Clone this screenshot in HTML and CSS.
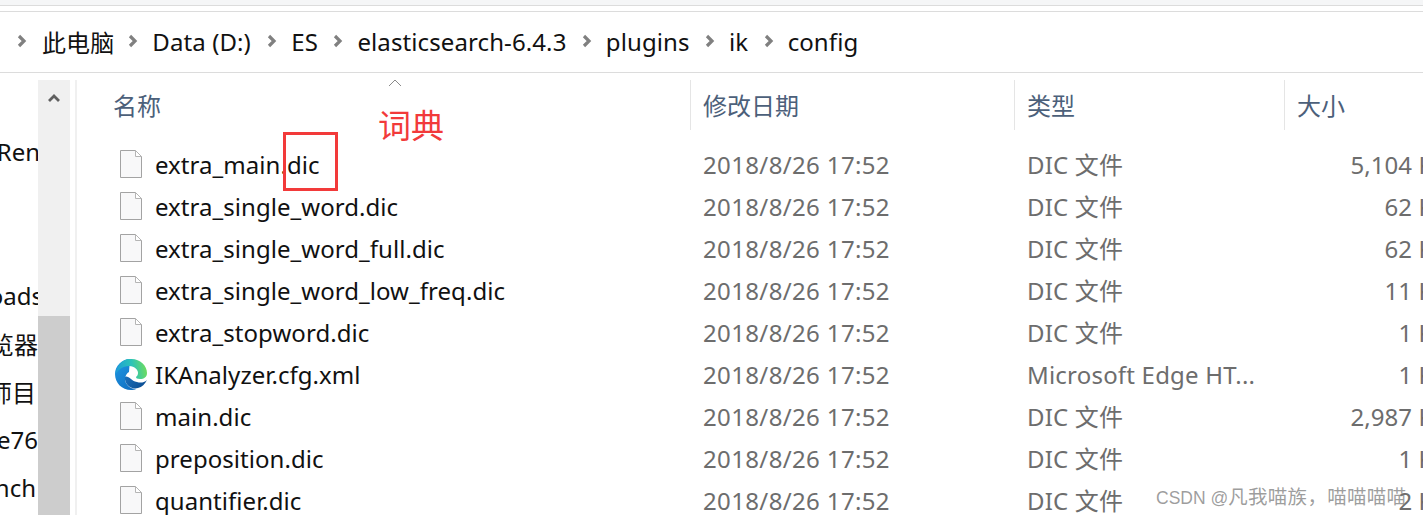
FILE: index.html
```html
<!DOCTYPE html>
<html lang="zh-CN">
<head>
<meta charset="utf-8">
<title>config</title>
<link rel="stylesheet" href="styles.css">
</head>
<body>
<div class="window">
  <div class="topstrip"></div>
  <div class="gapstrip"></div>
  <nav class="crumbs">
    <svg class="chev" viewBox="0 0 10 14"><path d="M2 2l5 5-5 5"/></svg><span>此电脑</span>
    <svg class="chev" viewBox="0 0 10 14"><path d="M2 2l5 5-5 5"/></svg><span>Data (D:)</span>
    <svg class="chev" viewBox="0 0 10 14"><path d="M2 2l5 5-5 5"/></svg><span>ES</span>
    <svg class="chev" viewBox="0 0 10 14"><path d="M2 2l5 5-5 5"/></svg><span>elasticsearch-6.4.3</span>
    <svg class="chev" viewBox="0 0 10 14"><path d="M2 2l5 5-5 5"/></svg><span>plugins</span>
    <svg class="chev" viewBox="0 0 10 14"><path d="M2 2l5 5-5 5"/></svg><span>ik</span>
    <svg class="chev" viewBox="0 0 10 14"><path d="M2 2l5 5-5 5"/></svg><span>config</span>
  </nav>
  <div class="main">
    <aside class="tree">
      <div class="tree-item">Ren</div>
      <div class="tree-item"></div>
      <div class="tree-item"></div>
      <div class="tree-item tree-item--right">oads</div>
      <div class="tree-item tree-item--near">览器</div>
      <div class="tree-item tree-item--left">师目</div>
      <div class="tree-item tree-item--near">e76</div>
      <div class="tree-item tree-item--left">nch</div>
    </aside>
    <div class="scrollbar">
      <div class="track">
        <svg class="scroll-up" viewBox="0 0 14 10"><path d="M2 8l5-5 5 5"/></svg>
      </div>
      <div class="thumb"></div>
    </div>
    <section class="list">
      <svg class="sort" viewBox="0 0 14 8"><path d="M1 7l6-6 6 6"/></svg>
      <header class="head">
        <div class="col">名称</div>
        <div class="col">修改日期</div>
        <div class="col">类型</div>
        <div class="col">大小</div>
      </header>
      <div class="row"><span class="name"><svg class="ficon" viewBox="0 0 22 28"><use href="#doc"/></svg>extra_main.dic</span><span class="date">2018/8/26 17:52</span><span class="type">DIC 文件</span><span class="size">5,104 KB</span></div>
      <div class="row"><span class="name"><svg class="ficon" viewBox="0 0 22 28"><use href="#doc"/></svg>extra_single_word.dic</span><span class="date">2018/8/26 17:52</span><span class="type">DIC 文件</span><span class="size">62 KB</span></div>
      <div class="row"><span class="name"><svg class="ficon" viewBox="0 0 22 28"><use href="#doc"/></svg>extra_single_word_full.dic</span><span class="date">2018/8/26 17:52</span><span class="type">DIC 文件</span><span class="size">62 KB</span></div>
      <div class="row"><span class="name"><svg class="ficon" viewBox="0 0 22 28"><use href="#doc"/></svg>extra_single_word_low_freq.dic</span><span class="date">2018/8/26 17:52</span><span class="type">DIC 文件</span><span class="size">11 KB</span></div>
      <div class="row"><span class="name"><svg class="ficon" viewBox="0 0 22 28"><use href="#doc"/></svg>extra_stopword.dic</span><span class="date">2018/8/26 17:52</span><span class="type">DIC 文件</span><span class="size">1 KB</span></div>
      <div class="row">
        <span class="name">
        <svg class="ficon ficon--edge" viewBox="0 0 32 32">
          <defs>
            <linearGradient id="edgeTop" x1="0" y1="0.6" x2="1" y2="0.5"><stop offset="0" stop-color="#1d9bd8"/><stop offset="0.55" stop-color="#2cc3b8"/><stop offset="1" stop-color="#6fdc5c"/></linearGradient>
            <linearGradient id="edgeLeft" x1="0" y1="0" x2="0.6" y2="1"><stop offset="0" stop-color="#1f9ae6"/><stop offset="1" stop-color="#1272c4"/></linearGradient>
            <linearGradient id="edgeBot" x1="0" y1="0" x2="1" y2="0.4"><stop offset="0" stop-color="#1a6fbb"/><stop offset="1" stop-color="#0c4f94"/></linearGradient>
          </defs>
          <path fill="url(#edgeLeft)" d="M15 1C7 1 0 8 0 16c0 9 7 16 16 16 2 0 4-.4 5-1-6 0-11-5-11-10 0-3 2-6 4-7z"/>
          <path fill="url(#edgeBot)" d="M10 19c-1 7 6 13 13 11 4-1 7-4 9-8-3 3-7 3-10 2-3-.5-5-2-6-3-2-2-5-3-6-2z"/>
          <path fill="url(#edgeTop)" d="M15 1c9-1 17 6 17 14 0 4-3 6-7 6-3 0-4-1-4-2 1-1 2-2 2-4 0-3-3-7-9-7-6 0-12 4-14 10C1 9 6 1 15 1z"/>
        </svg>IKAnalyzer.cfg.xml</span><span class="date">2018/8/26 17:52</span><span class="type type--latin">Microsoft Edge HT...</span><span class="size">1 KB</span>
      </div>
      <div class="row"><span class="name"><svg class="ficon" viewBox="0 0 22 28"><use href="#doc"/></svg>main.dic</span><span class="date">2018/8/26 17:52</span><span class="type">DIC 文件</span><span class="size">2,987 KB</span></div>
      <div class="row"><span class="name"><svg class="ficon" viewBox="0 0 22 28"><use href="#doc"/></svg>preposition.dic</span><span class="date">2018/8/26 17:52</span><span class="type">DIC 文件</span><span class="size">1 KB</span></div>
      <div class="row"><span class="name"><svg class="ficon" viewBox="0 0 22 28"><use href="#doc"/></svg>quantifier.dic</span><span class="date">2018/8/26 17:52</span><span class="type">DIC 文件</span><span class="size">2 KB</span></div>
    </section>
  </div>
  <div class="mark-box"></div>
  <div class="mark-label">词典</div>
  <div class="watermark">CSDN @<span class="wm-cjk">凡我喵族，喵喵喵喵</span></div>
</div>
<svg class="defs" width="0" height="0">
  <symbol id="doc" viewBox="0 0 22 28">
    <path d="M.5.5h15l6 6v21H.5z" fill="#f8f8f9" stroke="#a3a3a3"/>
    <path d="M15.5.5v6h6z" fill="#fff" stroke="#b5b5b5"/>
  </symbol>
</svg>
</body>
</html>
```
FILE: styles.css
```css
* { box-sizing: border-box; }
html, body { margin: 0; padding: 0; height: 100%; background: #fff; overflow: hidden; }
body { font-family: "Noto Sans", "Noto Sans CJK SC", sans-serif; }
.window { position: relative; width: 1423px; height: 515px; overflow: hidden; }
.defs { position: absolute; }

.topstrip { height: 6px; background: #f5f6f7; border-bottom: 1px solid #dcdcdc; }
.gapstrip { height: 6px; border-bottom: 1px solid #dcdcdc; }

.crumbs { height: 61px; display: flex; align-items: center; padding: 0 0 2px 17px; border-bottom: 1px solid #dcdcdc; font-size: 24px; letter-spacing: .1px; color: #111; white-space: nowrap; }
.crumbs span { margin: 0 15.4px 0 14px; }
.crumbs span:first-of-type { margin: 0 14px 0 15px; }
.crumbs span:nth-of-type(2) { margin-right: 16.4px; }
.chev { width: 10px; height: 14px; flex: none; }
.chev path { fill: none; stroke: #808080; stroke-width: 3.2; }

.main { display: flex; height: 442px; }
.tree { width: 38px; flex: none; overflow: hidden; padding-top: 54px; font-size: 24px; color: #111; }
.tree-item { height: 48px; width: 40px; display: flex; justify-content: flex-end; align-items: center; white-space: nowrap; }
.tree-item--right { width: 43px; }
.tree-item--near { width: 38px; }
.tree-item--left { width: 36px; }

.scrollbar { width: 32px; flex: none; margin-top: 7px; display: flex; flex-direction: column; }
.track { height: 236px; background: #f0f0f0; padding: 13px 0 0 9px; }
.scroll-up { display: block; width: 14px; height: 10px; }
.scroll-up path { fill: none; stroke: #606060; stroke-width: 2.8; }
.thumb { flex: 1; background: #cdcdcd; }

.list { position: relative; flex: 1; margin-left: 5px; margin-top: 7px; border-left: 2px solid #f0f0f0; min-width: 0; }
.sort { position: absolute; left: 311px; top: -1px; width: 14px; height: 8px; }
.sort path { fill: none; stroke: #8a8a8a; stroke-width: 1; }

.head { display: grid; grid-template-columns: 614px 324px 270px 1fr; height: 50px; margin-bottom: 14px; font-size: 24px; color: #4c607a; }
.col { display: flex; align-items: center; padding: 0 0 2px 12px; border-right: 1px solid #e5e5e5; }
.col:first-child { padding-left: 36px; }
.col:last-child { border-right: 0; }

.row { display: grid; grid-template-columns: 626px 324px 270px 152px; width: 1372px; height: 42px; align-items: center; padding-bottom: 2px; font-size: 24px; letter-spacing: .05px; white-space: nowrap; color: #6d6d6d; }
.name { display: flex; align-items: center; padding-left: 43px; color: #111; }
.ficon { width: 22px; height: 28px; margin-right: 13px; flex: none; }
.ficon--edge { width: 32px; height: 32px; margin: 0 8px 0 -5px; }
.date { letter-spacing: .36px; }
.type { letter-spacing: .2px; margin-bottom: 2px; }
.type--latin { margin-bottom: 0; }
.size { justify-self: end; }

.mark-box { position: absolute; left: 283px; top: 132px; width: 55px; height: 59px; border: 3px solid #f23a3a; }
.mark-label { position: absolute; left: 378px; top: 104px; font-size: 33px; line-height: 44px; color: #f23a3a; }
.watermark { position: absolute; left: 1156px; top: 484px; font-family: "Liberation Sans", "Noto Sans CJK SC", sans-serif; font-size: 17.5px; line-height: 24px; color: rgba(120,120,120,.72); white-space: nowrap; }
.wm-cjk { font-family: "Noto Sans CJK SC", sans-serif; font-size: 19.5px; letter-spacing: .3px; }
```
